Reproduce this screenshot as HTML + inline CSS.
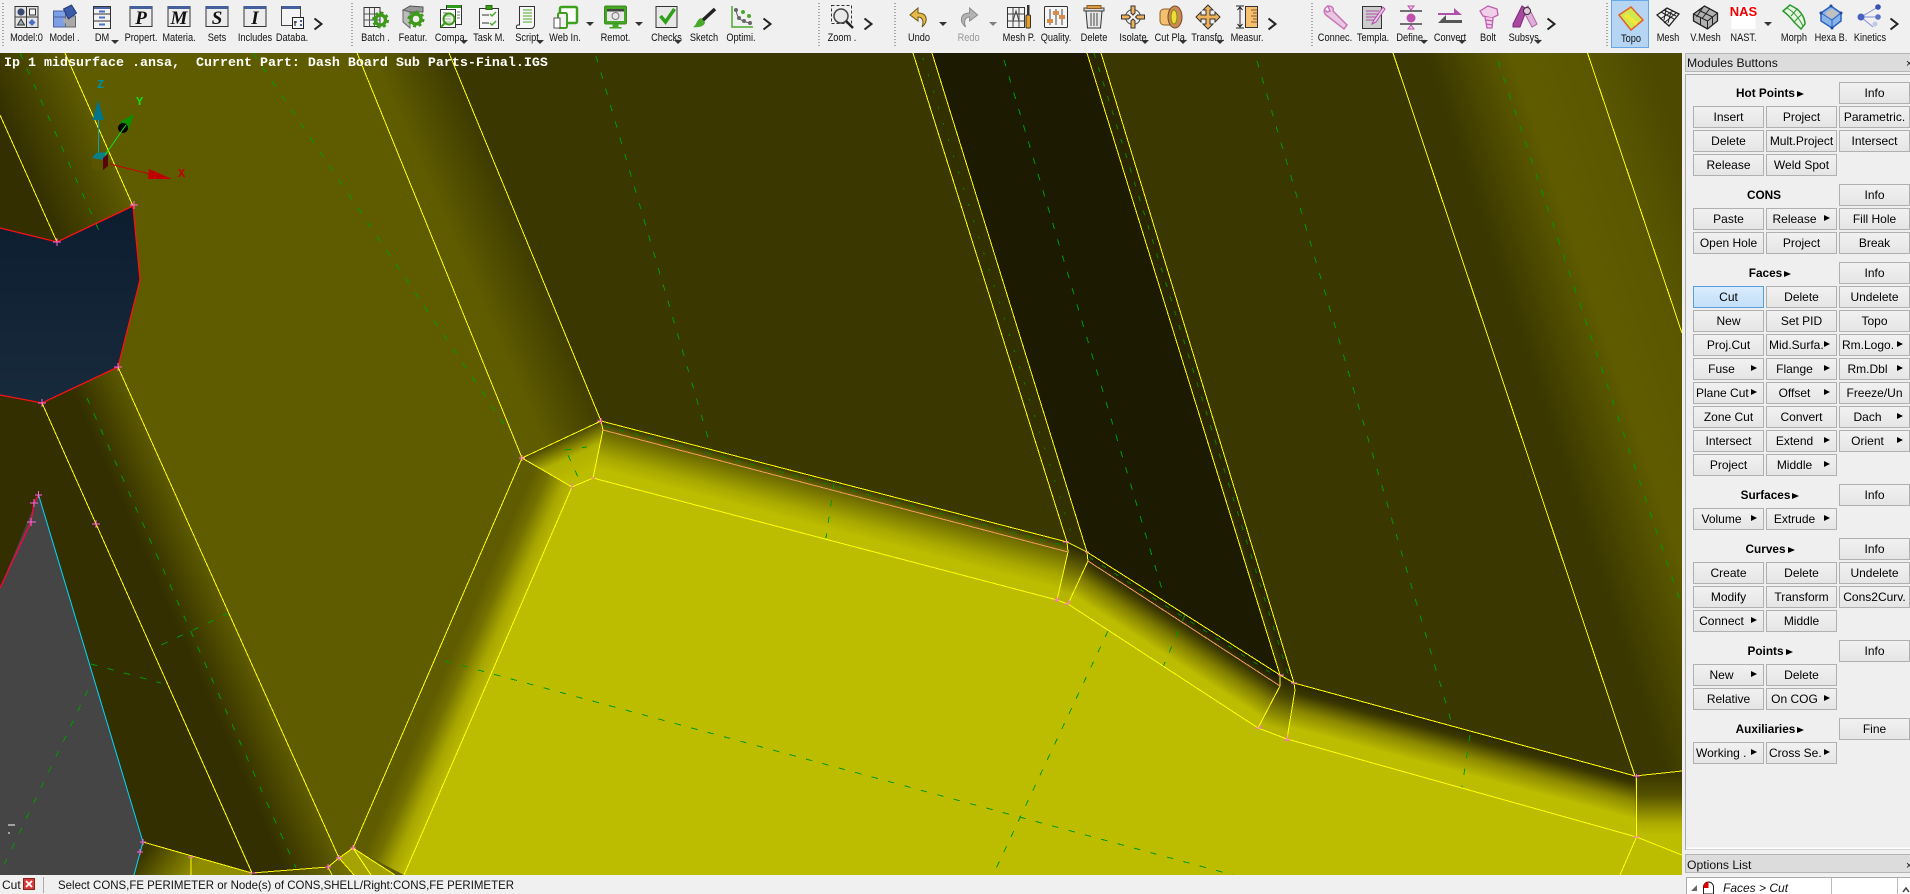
<!DOCTYPE html>
<html><head><meta charset="utf-8"><title>ANSA</title>
<style>
html,body{margin:0;padding:0;background:#f0f0f0;width:1910px;height:894px;overflow:hidden;font-family:"Liberation Sans",sans-serif}
svg{position:absolute;left:0;top:0;display:block}
.b{position:absolute;width:71px;height:22px;box-sizing:border-box;border:1px solid #b0b0b0;background:linear-gradient(#f1f1f1,#e5e5e5);font-size:12px;line-height:20px;text-align:center;color:#000;white-space:nowrap;overflow:hidden}
.c1{left:1693px}.c2{left:1766px}.c3{left:1839px}
.a{padding-right:14px}
.l{text-align:left;padding:0 0 0 2px}
.a i{position:absolute;left:57px;top:6px;width:0;height:0;border-top:3.5px solid transparent;border-bottom:3.5px solid transparent;border-left:6px solid #000}
.h{position:absolute;font-size:11.8px;font-weight:bold;line-height:16px;text-align:center;color:#000;left:1680px;width:180px}
.h i{display:inline-block;margin-left:2px;width:0;height:0;border-top:3.5px solid transparent;border-bottom:3.5px solid transparent;border-left:7px solid #000}
.t{font:11px "Liberation Sans",sans-serif;text-anchor:middle;transform-box:fill-box;transform-origin:center;transform:scaleX(.84);fill:#111}
</style></head><body>

<svg width="1910" height="894" viewBox="0 0 1910 894">
<defs>
<linearGradient id="g1" gradientUnits="userSpaceOnUse" x1="800" y1="473" x2="785.7" y2="528"><stop offset="0" stop-color="#3a3700"/><stop offset=".15" stop-color="#6a6700"/><stop offset=".6" stop-color="#a8a800"/><stop offset=".82" stop-color="#bcbc00"/></linearGradient>
<linearGradient id="g2" gradientUnits="userSpaceOnUse" x1="1180" y1="612" x2="1151" y2="657"><stop offset="0" stop-color="#1c1a00"/><stop offset=".2" stop-color="#3a3700"/><stop offset=".48" stop-color="#7f7c00"/><stop offset=".82" stop-color="#bcbc00"/></linearGradient>
<linearGradient id="g2b" gradientUnits="userSpaceOnUse" x1="1077" y1="547" x2="1060" y2="600"><stop offset="0" stop-color="#2a2700"/><stop offset=".3" stop-color="#5a5700"/><stop offset=".85" stop-color="#b5b500"/></linearGradient>
<linearGradient id="g2c" gradientUnits="userSpaceOnUse" x1="1288" y1="680" x2="1270" y2="732"><stop offset="0" stop-color="#2a2700"/><stop offset=".3" stop-color="#4a4700"/><stop offset=".9" stop-color="#b5b500"/></linearGradient>
<linearGradient id="g3" gradientUnits="userSpaceOnUse" x1="1470" y1="730" x2="1454" y2="790"><stop offset="0" stop-color="#2a2700"/><stop offset=".15" stop-color="#3a3700"/><stop offset=".42" stop-color="#8a8700"/><stop offset=".7" stop-color="#bcbc00"/></linearGradient>
<linearGradient id="g3b" gradientUnits="userSpaceOnUse" x1="0" y1="774" x2="0" y2="835"><stop offset="0" stop-color="#3a3700"/><stop offset=".35" stop-color="#555200"/><stop offset=".8" stop-color="#aaa900"/><stop offset="1" stop-color="#bcbc00"/></linearGradient>
<linearGradient id="gf" gradientUnits="userSpaceOnUse" x1="560" y1="440" x2="577" y2="476"><stop offset="0" stop-color="#4a4700"/><stop offset=".5" stop-color="#b0b000"/><stop offset="1" stop-color="#bcbc00"/></linearGradient>
<linearGradient id="gs" gradientUnits="userSpaceOnUse" x1="450" y1="660" x2="502" y2="683"><stop offset="0" stop-color="#5f5c00"/><stop offset=".25" stop-color="#747100"/><stop offset=".55" stop-color="#a8a600"/><stop offset=".8" stop-color="#bcbc00"/></linearGradient>
<linearGradient id="gl" gradientUnits="userSpaceOnUse" x1="143" y1="623" x2="220" y2="589"><stop offset=".35" stop-color="#332f00"/><stop offset="1" stop-color="#5f5c00"/></linearGradient>
<linearGradient id="gtl" gradientUnits="userSpaceOnUse" x1="0" y1="115" x2="78" y2="80"><stop offset="0" stop-color="#332f00"/><stop offset="1" stop-color="#5f5c00"/></linearGradient>
<linearGradient id="g12" gradientUnits="userSpaceOnUse" x1="420" y1="220" x2="510" y2="180"><stop offset=".22" stop-color="#5f5c00"/><stop offset="1" stop-color="#3a3700"/></linearGradient>
<linearGradient id="gr" gradientUnits="userSpaceOnUse" x1="1393" y1="53" x2="1678" y2="-42"><stop offset=".1" stop-color="#3a3700"/><stop offset=".38" stop-color="#5f5c00"/><stop offset=".6" stop-color="#5a5700"/><stop offset=".8" stop-color="#4d4a00"/></linearGradient>
<linearGradient id="gn" x1="0" y1="0" x2="0" y2="1"><stop offset="0" stop-color="#0d1d30"/><stop offset="1" stop-color="#172a3c"/></linearGradient>
<linearGradient id="gb" gradientUnits="userSpaceOnUse" x1="150" y1="845" x2="190" y2="875"><stop offset="0" stop-color="#3a3700"/><stop offset="1" stop-color="#8f8c00"/></linearGradient>
<linearGradient id="gb2" gradientUnits="userSpaceOnUse" x1="255" y1="870" x2="345" y2="870"><stop offset="0" stop-color="#3a3700"/><stop offset="1" stop-color="#6f6c00"/></linearGradient>
<linearGradient id="gst" gradientUnits="userSpaceOnUse" x1="1045" y1="300" x2="1062" y2="295"><stop offset="0" stop-color="#333000"/><stop offset="1" stop-color="#1c1a00"/></linearGradient>
<linearGradient id="gst2" gradientUnits="userSpaceOnUse" x1="1180" y1="400" x2="1195" y2="395"><stop offset="0" stop-color="#1c1a00"/><stop offset=".4" stop-color="#3f3c00"/><stop offset="1" stop-color="#2a2700"/></linearGradient>
</defs>

<!-- viewport -->
<rect x="0" y="53" width="1682" height="822" fill="#5f5c00"/>
<polygon points="0,53 65,53 133,206 57,242 0,228" fill="url(#gtl)"/>
<polygon points="0,395 42,403 252,875 0,875" fill="#332f00"/>
<polygon points="42,403 118,367 339,858 328,867 252,873" fill="url(#gl)"/>
<polygon points="357,53 449,53 601,421 522,458" fill="url(#g12)"/>
<polygon points="449,53 913,53 1067,542 601,421" fill="#3a3700"/>
<polygon points="913,53 932,53 1087,552 1067,542" fill="url(#gst)"/>
<polygon points="932,53 1087,53 1280,675 1087,552" fill="#1c1a00"/>
<polygon points="1087,53 1101,53 1294,683 1280,675" fill="url(#gst2)"/>
<polygon points="1101,53 1393,53 1635,776 1294,683" fill="#3a3700"/>
<polygon points="1393,53 1682,53 1682,771 1635,776" fill="url(#gr)"/>
<polygon points="522,458 353,848 404,875 572,487" fill="url(#gs)"/>
<polygon points="339,858 353,848 395,875 354,875" fill="#a5a300"/>
<polygon points="572,487 593,478 1057,600 1068,604 1258,728 1287,739 1636,837 1682,855 1682,875 404,875" fill="#bcbc00"/>
<polygon points="601,421 1067,542 1068,552 1057,600 593,478 603,430" fill="url(#g1)"/>
<polygon points="1067,542 1087,552 1088,561 1068,604 1057,600 1068,552" fill="url(#g2b)"/>
<polygon points="1087,552 1280,675 1280,686 1258,728 1068,604 1088,561" fill="url(#g2)"/>
<polygon points="1280,675 1294,683 1295,690 1287,739 1258,728 1280,686" fill="url(#g2c)"/>
<polygon points="1294,683 1635,776 1636.5,837 1287,739 1295,690" fill="url(#g3)"/>
<polygon points="1636.5,776 1682,771 1682,855 1636.5,837" fill="url(#g3b)"/>
<polygon points="522,458 601,421 603,430 593,478 572,487" fill="url(#gf)"/>
<polygon points="143,842 252,873 252,875 134,875" fill="url(#gb)"/>
<polygon points="252,873 328,867 339,858 354,875 252,875" fill="url(#gb2)"/>
<polygon points="0,228 57,242 133,206 140,280 118,367 42,403 0,395" fill="url(#gn)"/>
<polygon points="0,588 38.6,495 143,842 134,875 0,875" fill="#454545"/>

<!-- dashed green -->
<g fill="none" stroke="#009a00" stroke-width="1" stroke-dasharray="6.500 10.500" shape-rendering="crispEdges">
<path d="M20 53L100 233"/><path d="M87 398L296 868"/><path d="M253 53L508 430"/>
<path d="M596 56L711 448"/><path d="M1004 60L1164 596"/><path d="M1257 61L1452 724"/><path d="M1498 61L1679 598"/>
<path d="M229 613L157 647"/><path d="M91 664L161 683"/><path d="M88 690L0 873"/>
<path d="M445 661L1233 875"/><path d="M834 483L826 538"/><path d="M1185 615L1163 667"/><path d="M1108 631L993 875"/><path d="M1470 735L1462 787"/>
<path d="M565 450L587 447"/><path d="M568 455L578 477"/>
</g>
<g fill="none" stroke="#0a8000" stroke-width="1" stroke-dasharray="5 10" shape-rendering="crispEdges">
<path d="M605 426L1066 546"/><path d="M1089 557L1279 678"/><path d="M1094 53L1289 677"/>
</g>
<path d="M923 58L1077 552" fill="none" stroke="#0a8000" stroke-dasharray="2 15" shape-rendering="crispEdges"/>

<!-- yellow lines -->
<g fill="none" stroke="#ffff00" stroke-width="1" shape-rendering="crispEdges">
<path d="M65 53L133 206"/><path d="M0 115L57 242"/><path d="M42 403L252 873"/><path d="M118 367L339 858"/>
<path d="M357 53L522 458L353 848"/><path d="M449 53L601 421"/><path d="M913 53L1067 542"/><path d="M932 53L1087 552"/>
<path d="M1087 53L1280 675"/><path d="M1101 53L1294 683"/><path d="M1393 53L1635 776"/><path d="M1587.5 53L1682 333"/>
<path d="M522 458L601 421"/><path d="M522 458L572 487L593 478L603 430L601 421"/>
<path d="M572 487L404 875"/>
<path d="M601 421L1067 542L1087 552L1280 675L1294 683L1635 776L1682 771"/>
<path d="M593 478L1057 600L1068 604L1258 728L1287 739L1636.5 837L1682 855"/>
<path d="M1067 542L1068 552L1057 600"/><path d="M1087 552L1088 561L1068 604"/>
<path d="M1280 675L1280 686L1258 728"/><path d="M1294 683L1295 690L1287 739"/>
<path d="M1636.5 776L1636.5 837L1620 875"/>
<path d="M143 842L252 873L328 867L339 858L353 848L395 875"/><path d="M191 857L191 875"/><path d="M339 858L354 875"/><path d="M353 848L371 875"/><path d="M328 867L332 875"/>
</g>
<!-- orange -->
<g fill="none" stroke="#f09a60" stroke-width="1" shape-rendering="crispEdges">
<path d="M603 430L1068 552"/><path d="M1088 561L1280 686"/>
</g>
<!-- red / cyan -->
<g fill="none" stroke-width="1.3">
<path d="M0 228L57 242L133 206L140 280L118 367L42 403L0 395" stroke="#ff1010"/>
<path d="M0 588L31 522L34 503L38.6 495" stroke="#ff0040"/>
<path d="M38.6 495L143 842L134 875" stroke="#00d8ff" stroke-width="1"/>
</g>
<!-- crosses -->
<g fill="none" stroke="#ff66dd" stroke-width="1" shape-rendering="crispEdges">
<path d="M53 242h8M57 238v8M130 205h8M134 201v8M114 367h8M118 363v8M38 403h8M42 399v8"/>
<path d="M35 495h7M38.6 491v7M30 503h8M34 499v8M27 522h9M31 518v8M92 524h8M96 520v8"/>
<path d="M140 842h6M143 839v6M137 852h6M140 849v6M188 857h6M249 873h8M325 867h6M328 864v6M336 858h6M339 855v6M350 848h6M353 845v6"/>
<path d="M597 421h6M601 418v6M519 458h6M522 455v6M572 483v7M591 478h4"/>
<path d="M1063 542h6M1085 552h4M1054 600h6M1057 597v5M1064 604h5M1069 600v4M1278 675h6M1291 683h6M1255 728h6M1261 725v4M1284 740h6M1287 735v6M1633 776h7M1636.5 774v4M1633 837h7"/>
</g>
<path d="M8 825h7M8 833h2" stroke="#fff" stroke-width="1" shape-rendering="crispEdges"/>

<!-- gizmo -->
<polygon points="98,100 92.5,120 104,120" fill="#00748a"/>
<path d="M98.5 120V155" stroke="#0aa0b0" stroke-width="1"/>
<rect x="92" y="158" width="11" height="11" fill="#5b5500"/>
<polygon points="92,158 96,153 108,152 103,160" fill="#0a7f85"/>
<polygon points="103,158 108,154 108,166 103,170" fill="#5a0505"/>
<polygon points="134,114 120,122 128,131" fill="#0d8f00"/>
<circle cx="123" cy="128" r="5" fill="#000"/>
<path d="M126 125L105 155" stroke="#10e010" stroke-width="1"/>
<path d="M110 164L150 174" stroke="#cc0000" stroke-width="1"/>
<polygon points="172,179 149,169 148,179" fill="#c00000"/>
<g font-family="'Liberation Mono',monospace" font-weight="bold" font-size="12">
<text x="97" y="88" fill="#008fa0">Z</text><text x="136" y="105" fill="#10e010">Y</text><text x="178" y="177" fill="#c00000">X</text>
</g>
<text x="4" y="66" xml:space="preserve" font-family="'Liberation Mono',monospace" font-weight="bold" font-size="13.33" fill="#fff">Ip 1 midsurface .ansa,  Current Part: Dash Board Sub Parts-Final.IGS</text>

<!-- right background -->
<rect x="1682" y="53" width="228" height="841" fill="#f0f0f0"/>
<!-- status -->
<rect x="0" y="875" width="1910" height="19" fill="#f0f0f0"/>
<text x="2" y="889" font-family="'Liberation Sans',sans-serif" font-size="12" fill="#111">Cut</text>
<rect x="23.5" y="878.5" width="11" height="11" fill="#d83a3a" stroke="#8a2020"/>
<path d="M26 881l6 6M32 881l-6 6" stroke="#fff" stroke-width="1.8"/>
<path d="M43.5 877V893" stroke="#aaa"/>
<text x="58" y="889" font-family="'Liberation Sans',sans-serif" font-size="12" fill="#111" textLength="456" lengthAdjust="spacingAndGlyphs">Select CONS,FE PERIMETER or Node(s) of CONS,SHELL/Right:CONS,FE PERIMETER</text>

<!-- panel frame -->
<rect x="1685.5" y="53.5" width="230" height="18" fill="#dcdcdc" stroke="#b5b5b5"/>
<text x="1687" y="67" font-family="'Liberation Sans',sans-serif" font-size="12.2" fill="#111">Modules Buttons</text>
<text x="1906" y="67" font-family="'Liberation Sans',sans-serif" font-size="11" fill="#111">×</text>
<rect x="1685.5" y="74.5" width="230" height="775" fill="#efefef" stroke="#aaa"/>
<path d="M1686 848.5H1910" stroke="#fff" stroke-width="2"/>
<rect x="1685.5" y="854.5" width="230" height="18" fill="#dcdcdc" stroke="#b5b5b5"/>
<text x="1687" y="869" font-family="'Liberation Sans',sans-serif" font-size="12.2" fill="#111">Options List</text>
<text x="1906" y="869" font-family="'Liberation Sans',sans-serif" font-size="11" fill="#111">×</text>
<rect x="1686.5" y="877.5" width="230" height="20" fill="#fff" stroke="#aaa"/>
<path d="M1831.5 878V894M1897.5 878V894" stroke="#bbb"/>
<path d="M1903 892l3-4 3 4" fill="none" stroke="#444" stroke-width="1.5"/>
<polygon points="1697,885 1697,891 1691,891" fill="#666"/>
<path d="M1703.5 894V887a5 5 0 0 1 10 0V894z" fill="#fff" stroke="#222"/>
<path d="M1703.5 888V886a5 5 0 0 1 5-4V888z" fill="#e00000"/>
<text x="1723" y="892" font-family="'Liberation Sans',sans-serif" font-size="12" font-style="italic" fill="#111">Faces &gt; Cut</text>
</svg>

<!-- Toolbar -->
<svg width="1910" height="53" viewBox="0 0 1910 53" style="background:#f0f0f0">
<defs>
<g id="gear"><circle r="5" fill="none" stroke="#3f9a1c" stroke-width="3.4"/><circle r="7.3" fill="none" stroke="#3f9a1c" stroke-width="2.4" stroke-dasharray="3 2.7"/></g>
<path id="chev" d="M-3.5 18.5L3.5 24L-3.5 29.5" fill="none" stroke="#222" stroke-width="2"/>
<path id="dd" d="M-4 0h8l-4 4z" fill="#333"/>
</defs>
<g stroke="#a8a8a8" stroke-dasharray="1 2" stroke-width="2">
<path d="M3 3V46M352 3V46M819 3V46M895 3V46M1312 3V46M1607 3V46"/>
</g>

<rect x="1611.5" y=".5" width="37" height="47" fill="#b5d5f2" stroke="#66a7e8"/>

<!-- labels -->
<g>
<text class="t" x="26.5" y="41">Model:0</text><text class="t" x="64.5" y="41">Model .</text><text class="t" x="102" y="41">DM</text><text class="t" x="141" y="41">Propert.</text><text class="t" x="179" y="41">Materia.</text><text class="t" x="217" y="41">Sets</text><text class="t" x="255" y="41">Includes</text><text class="t" x="292" y="41">Databa.</text>
<text class="t" x="375.5" y="41">Batch .</text><text class="t" x="413" y="41">Featur.</text><text class="t" x="451" y="41">Compa.</text><text class="t" x="489" y="41">Task M.</text><text class="t" x="527" y="41">Script</text><text class="t" x="565" y="41">Web In.</text><text class="t" x="615.5" y="41">Remot.</text>
<text class="t" x="666.5" y="41">Checks</text><text class="t" x="704" y="41">Sketch</text><text class="t" x="741" y="41">Optimi.</text><text class="t" x="842" y="41">Zoom .</text>
<text class="t" x="919" y="41">Undo</text><text class="t" x="968.6" y="41" style="fill:#999">Redo</text><text class="t" x="1019" y="41">Mesh P.</text><text class="t" x="1056" y="41">Quality.</text><text class="t" x="1094" y="41">Delete</text><text class="t" x="1133" y="41">Isolate</text><text class="t" x="1171" y="41">Cut Pla.</text><text class="t" x="1208" y="41">Transfo.</text><text class="t" x="1247" y="41">Measur.</text>
<text class="t" x="1335" y="41">Connec.</text><text class="t" x="1373" y="41">Templa.</text><text class="t" x="1411" y="41">Define.</text><text class="t" x="1450" y="41">Convert</text><text class="t" x="1488" y="41">Bolt</text><text class="t" x="1525" y="41">Subsys.</text>
<text class="t" x="1631" y="42">Topo</text><text class="t" x="1668" y="41">Mesh</text><text class="t" x="1705.5" y="41">V.Mesh</text><text class="t" x="1743.5" y="41">NAST.</text><text class="t" x="1794" y="41">Morph</text><text class="t" x="1831" y="41">Hexa B.</text><text class="t" x="1870" y="41">Kinetics</text>
</g>

<!-- chevrons & dropdowns -->
<use href="#chev" x="318"/><use href="#chev" x="767"/><use href="#chev" x="868"/><use href="#chev" x="1272"/><use href="#chev" x="1551"/><use href="#chev" x="1894"/>
<use href="#dd" x="115" y="40"/><use href="#dd" x="464" y="40"/><use href="#dd" x="540" y="40"/><use href="#dd" x="590" y="22"/><use href="#dd" x="639" y="22"/><use href="#dd" x="678" y="40"/><use href="#dd" x="943" y="22"/><use href="#dd" x="993" y="22" style="opacity:.6"/><use href="#dd" x="1145" y="40"/><use href="#dd" x="1183" y="40"/><use href="#dd" x="1220" y="40"/><use href="#dd" x="1424" y="40"/><use href="#dd" x="1462" y="40"/><use href="#dd" x="1538" y="40"/><use href="#dd" x="1768" y="22"/>

<!-- Model:0 -->
<g transform="translate(26.5 0)"><rect x="-11.5" y="6.5" width="23" height="21" fill="#e4e4e4" stroke="#333"/><path d="M0 7V27M-11 17H11" stroke="#333"/><circle cx="-5.5" cy="12" r="3.6" fill="#38486e"/><rect x="3" y="9" width="6" height="6" fill="#f4f4f4" stroke="#333"/><path d="M-9 25l3.5-6 3.5 6z" fill="#9aa" stroke="#333"/><path d="M5.5 19l3.5 3.5-3.5 3.5-3.5-3.5z" fill="#4a70c8"/></g>
<!-- Model . -->
<g transform="translate(64.5 0)"><rect x="-11" y="11" width="12" height="12" fill="#7d9fe6" stroke="#4a60a0"/><rect x="-11" y="17" width="12" height="10" fill="#7d9fe6" stroke="#4a60a0"/><rect x="1" y="16" width="10" height="11" fill="#a8a8a8" stroke="#666"/><circle cx="1" cy="21" r="2.5" fill="#a8a8a8"/><polygon points="-1,9 7,5 12,13 4,19" fill="#3b5aa8" stroke="#263c78"/></g>
<!-- DM -->
<g transform="translate(102 0)"><rect x="-8.5" y="6.5" width="17" height="22" fill="#f2f2f2" stroke="#333"/><rect x="-8" y="7" width="16" height="2" fill="#4a66aa"/><path d="M-8 14H8M-8 21H8" stroke="#333"/><path d="M-3 11.500h6M-3 17.500h6M-3 24.500h6" stroke="#4a70c8" stroke-width="2"/></g>
<!-- P M S I -->
<g font-family="'Liberation Serif',serif" font-weight="bold" font-style="italic" font-size="19" text-anchor="middle" fill="#111">
<g transform="translate(141 0)"><rect x="-11" y="6.500" width="22" height="20" fill="#ececec" stroke="#333"/><rect x="-11" y="6" width="22" height="3" fill="#46609e"/><text y="24">P</text></g>
<g transform="translate(179 0)"><rect x="-11" y="6.500" width="22" height="20" fill="#ececec" stroke="#333"/><rect x="-11" y="6" width="22" height="3" fill="#46609e"/><text y="24">M</text></g>
<g transform="translate(217 0)"><rect x="-11" y="6.500" width="22" height="20" fill="#ececec" stroke="#333"/><rect x="-11" y="6" width="22" height="3" fill="#46609e"/><text y="24">S</text></g>
<g transform="translate(255 0)"><rect x="-11" y="6.500" width="22" height="20" fill="#ececec" stroke="#333"/><rect x="-11" y="6" width="22" height="3" fill="#46609e"/><text y="24">I</text></g>
</g>
<!-- Databa -->
<g transform="translate(292 0)"><rect x="-10.500" y="6.500" width="19" height="19" fill="#f4f4f4" stroke="#444"/><rect x="-10" y="6" width="18" height="3" fill="#46609e"/><rect x="0.500" y="17.500" width="11" height="11" fill="#f4f4f4" stroke="#222"/><path d="M3 21v5M2 22h3" stroke="#111"/><path d="M8 21h2M8 25h2" stroke="#3a5fb0" stroke-width="2"/></g>
<!-- Batch -->
<g transform="translate(375.500 0)"><rect x="-11.500" y="7.500" width="16" height="19" fill="#eee" stroke="#333"/><path d="M-6 8V26M-1 8V26M-11 14H4M-11 20H4" stroke="#555"/><use href="#gear" x="5" y="20"/></g>
<!-- Featur -->
<g transform="translate(413 0)"><polygon points="-10,10 -3,6 10,7 10,12 -3,12" fill="#999" stroke="#555"/><polygon points="-10,10 -3,12 -3,28 -10,22" fill="#bbb" stroke="#666"/><use href="#gear" x="3" y="19"/></g>
<!-- Compa -->
<g transform="translate(451 0)"><rect x="-4.500" y="5.500" width="15" height="19" fill="#fff" stroke="#333"/><rect x="-4" y="5" width="14" height="3" fill="#2e9a1a"/><rect x="-10.500" y="9.500" width="15" height="18" fill="#fff" stroke="#333"/><path d="M-8 13h8M-8 16h8M-8 19h8M-8 22h8M6 12h3M6 15h3M6 18h3" stroke="#777"/><circle cx="-2" cy="19" r="5.500" fill="#d8f0c8" fill-opacity=".5" stroke="#3a9a1a" stroke-width="2"/><path d="M-6 23l-4 4" stroke="#3a9a1a" stroke-width="2"/></g>
<!-- Task M -->
<g transform="translate(489 0)"><rect x="-9.500" y="8.500" width="19" height="20" fill="#f6f6f6" stroke="#333"/><rect x="-3" y="5.500" width="6" height="4" fill="#3a9a1a" stroke="#2a6a10"/><path d="M-7 15h7M-7 23h7" stroke="#333"/><path d="M1 14l2 2 4-4M1 23l2 2 4-4" fill="none" stroke="#4aa82a" stroke-width="1.500"/></g>
<!-- Script -->
<g transform="translate(527 0)"><path d="M-7.500 6.500H7.500V25C7.500 27 6 28.500 4 28.500H-10C-11 28.500-11 25-9 25H-7.500z" fill="#f8f8f8" stroke="#333"/><path d="M-4 10h9M-4 13h9M-4 16h9M-4 19h9M-4 22h9" stroke="#4aa82a"/></g>
<!-- Web In -->
<g transform="translate(565 0)"><rect x="-5" y="7" width="17" height="16" rx="1.500" fill="#fff" stroke="#3fa01e" stroke-width="2.500"/><rect x="-7" y="13" width="9" height="15" rx="1.500" fill="#f4f4f4" stroke="#3fa01e" stroke-width="2"/><rect x="-11" y="18" width="6" height="10" fill="#fff" stroke="#555"/></g>
<!-- Remot -->
<g transform="translate(615.500 0)"><rect x="-11" y="6" width="22" height="18" rx="1.500" fill="#45a626" stroke="#3a8a1c"/><rect x="-8.500" y="9" width="17" height="12" fill="#e8e8e8"/><rect x="-8.500" y="9" width="17" height="2.500" fill="#444"/><circle cy="16" r="3.500" fill="none" stroke="#777"/><rect x="-3" y="24" width="6" height="3" fill="#45a626"/><rect x="-6" y="27" width="12" height="1.500" fill="#45a626"/></g>
<!-- Checks -->
<g transform="translate(666.500 0)"><rect x="-10.500" y="6.500" width="21" height="21" fill="#e8e8e8" stroke="#333"/><path d="M-6 16l5 6L8 9" fill="none" stroke="#2fa01a" stroke-width="3.500"/></g>
<!-- Sketch -->
<g transform="translate(704 0)"><path d="M11 9L-2 21" stroke="#222" stroke-width="3.500"/><path d="M-3 18C-8 20-7 25-11 27C-5 28 1 26 1 22z" fill="#4aa82a"/></g>
<!-- Optimi -->
<g transform="translate(741 0)"><path d="M-9 6V27H12" fill="none" stroke="#4aa82a" stroke-width="1.500"/><path d="M-5 10C-4 20 3 22 9 23" fill="none" stroke="#555"/><g fill="#666"><circle cx="-5" cy="10" r="2"/><circle cx="-2" cy="18" r="2"/><circle cx="3" cy="21" r="2"/><circle cx="9" cy="23" r="2"/></g><g fill="#4aa82a"><circle cx="2" cy="12" r="2"/><circle cx="8" cy="16" r="2"/></g></g>
<!-- Zoom -->
<g transform="translate(842 0)"><rect x="-10.500" y="5.500" width="20" height="18" fill="none" stroke="#333" stroke-dasharray="3 2"/><circle cy="16" r="7" cx="-1" fill="#e8e8e8" stroke="#444" stroke-width="1.500"/><path d="M4 21l7 7" stroke="#222" stroke-width="2.500"/></g>
<!-- Undo -->
<g transform="translate(919 0)"><path d="M3 27C10 21 8 13 -1 13V8L-9 15L-1 21V17C4 17 5 22 3 27z" fill="#e8b84a" stroke="#6a5518"/></g>
<!-- Redo -->
<g transform="translate(968.600 0)"><path d="M-3 27C-10 21 -8 13 1 13V8L9 15L1 21V17C-4 17 -5 22 -3 27z" fill="#b4b4b4" stroke="#8a8a8a"/></g>
<!-- Mesh P -->
<g transform="translate(1019 0)"><rect x="-11.500" y="7.500" width="17" height="20" fill="#f2f2f2" stroke="#333"/><path d="M-6 8V27M0 8V27M-11 14H5M-11 21H5M-6 21L-3 11L0 21" stroke="#444" fill="none"/><rect x="8" y="5" width="2.500" height="10" fill="#333"/><rect x="7" y="15" width="4.500" height="13" rx="1" fill="#e8a020" stroke="#333"/></g>
<!-- Quality -->
<g transform="translate(1056 0)"><rect x="-11.500" y="6.500" width="23" height="21" rx="1" fill="#f6f6f6" stroke="#333"/><path d="M-6 9V25M0 9V25M6 9V25" stroke="#444"/><rect x="-9" y="19" width="6" height="4" fill="#d98b4a"/><rect x="-3" y="11" width="6" height="4" fill="#d98b4a"/><rect x="3" y="15" width="6" height="4" fill="#d98b4a"/></g>
<!-- Delete -->
<g transform="translate(1094 0)"><rect x="-10" y="8" width="20" height="3" fill="#d8d8d8" stroke="#444"/><rect x="-7" y="5.500" width="14" height="3" fill="#d99a4a" stroke="#8a5a20"/><path d="M-8 11L-6.500 28H6.500L8 11z" fill="#e8e8e8" stroke="#333"/><path d="M-3 13V26M0 13V26M3 13V26" stroke="#444"/></g>
<!-- Isolate -->
<g transform="translate(1133 0)"><circle cy="17" r="7.500" fill="none" stroke="#444"/><g fill="#f2b25a" stroke="#333"><path d="M-2 6h4v7l-2 2-2-2zM-2 28h4v-7l-2-2-2 2zM-11.500 15v4h7l2-2-2-2zM11.500 15v4h-7l-2-2 2-2z"/></g></g>
<!-- Cut Pla -->
<g transform="translate(1171 0)"><rect x="-11" y="9" width="14" height="16" rx="4" fill="#f2c070" stroke="#8a6020"/><ellipse cx="4" cy="17" rx="7" ry="11" fill="#c98a5a" stroke="#7a4a20"/><ellipse cx="3" cy="17" rx="3" ry="7" fill="#eedd33" stroke="#8a8a10"/></g>
<!-- Transfo -->
<g transform="translate(1208 0)"><path d="M0 5L5 10H2V15H7V12L12 17L7 22V19H2V24H5L0 29L-5 24H-2V19H-7V22L-12 17L-7 12V15H-2V10H-5z" fill="#f2b25a" stroke="#333"/></g>
<!-- Measur -->
<g transform="translate(1247 0)"><path d="M-11 6h8M-11 28h8M-7 7V27M-9.500 10l2.500-3 2.500 3M-9.500 24l2.500 3 2.500-3" fill="none" stroke="#222"/><rect x="-1.500" y="6.500" width="12" height="21" fill="#f6c070" stroke="#333"/><path d="M4 10h6M6 13h4M4 16h6M6 19h4M4 22h6" stroke="#8a5a20"/></g>
<!-- Connec -->
<g transform="translate(1335 0)"><path d="M-7 6C-11 8-12 12-9 15L9 29L12 25L-2 11C-1 8-3 6-7 6L-5 11L-8 12L-11 9" fill="#e8c8e0" stroke="#c878b8" stroke-width="1.500"/></g>
<!-- Templa -->
<g transform="translate(1373 0)"><rect x="-10.500" y="6.500" width="19" height="22" fill="#ccc" stroke="#333"/><path d="M-7 11h13M-7 14h13M-7 17h10M-7 20h8" stroke="#b050a8"/><path d="M10 7L1 20L-1 24L3 22L12 9z" fill="#efc8e8" stroke="#b050a8"/></g>
<!-- Define -->
<g transform="translate(1411 0)"><path d="M-11 11H11M-11 24H11" stroke="#222" stroke-width="1.300"/><circle cy="18" r="4.500" fill="#c050b0"/><path d="M-3 6h6l-3 4zM-3 29h6l-3-4z" fill="#efc8e8" stroke="#c050b0"/></g>
<!-- Convert -->
<g transform="translate(1450 0)"><path d="M-12 13H4V8L12 15H-12z" fill="#b050a8"/><path d="M12 20H-4V15L-12 23H12z" fill="#555"/></g>
<!-- Bolt -->
<g transform="translate(1488 0)"><path d="M-8 11L0 6L9 9L10 15L4 18L-5 16z" fill="#f0d0e8" stroke="#c060b0" stroke-width="1.300"/><path d="M-3 17L-1 28L4 28L5 18M-2 20L5 21M-2 24L5 25" fill="#f0d0e8" stroke="#c060b0" stroke-width="1.300"/></g>
<!-- Subsys -->
<g transform="translate(1525 0)"><polygon points="0,8 3,6 12,24 7,27 0,14" fill="#e0b0d8" stroke="#b060a8"/><polygon points="0,8 -3,6 -12,24 -12,27 -5,27 0,14" fill="#a848a0" stroke="#7a2a78"/><circle cy="11" r="3.500" cx="2" fill="#e8c8e0" stroke="#333"/></g>
<!-- Topo -->
<g transform="translate(1631 0)"><polygon points="-12,15 0,7 12,20 0,30" fill="#cfe850" stroke="#e8602a" stroke-width="1.500"/><path d="M-6 15L6 24" stroke="#f2e83a" stroke-width="4"/></g>
<!-- Mesh -->
<g transform="translate(1668 0)"><polygon points="-11,15 -1,8 11,14 1,26" fill="#f0f0f0" stroke="#222" stroke-width="1.300"/><path d="M-7 12L6 19M-4 10L8 16M-8 19L5 11M-4 23L8 13M-2 9L-4 20M3 12L0 23" stroke="#222" fill="none"/></g>
<!-- V.Mesh -->
<g transform="translate(1705.500 0)"><polygon points="-12,14 -1,6 12,13 12,21 2,29 -12,21" fill="#b0b0b0" stroke="#222" stroke-width="1.300"/><path d="M-12 14L2 21L12 13M2 21V29M-7 10L7 17M-3 8L-9 17M4 9L-3 18M-5 17V25M7 17V25" stroke="#222" fill="none"/></g>
<!-- NAST -->
<g transform="translate(1743.500 0)"><rect x="-12" y="6" width="24" height="23" fill="#fff"/><text x="0" y="16" text-anchor="middle" font-family="'Liberation Sans',sans-serif" font-weight="bold" font-size="13" fill="#f00000">NAS</text></g>
<!-- Morph -->
<g transform="translate(1794 0)"><path d="M-11 11L-4 5L3 9C9 14 11 20 11 24L7 29L0 22C-3 18-7 14-11 11z" fill="#eaf4e4" stroke="#2a9a2a" stroke-width="1.500"/><path d="M-7 8C0 12 5 18 9 26M-3 16L3 9M0 22L7 15" fill="none" stroke="#2a9a2a"/></g>
<!-- Hexa B -->
<g transform="translate(1831 0)"><polygon points="-10,13 0,6 10,13 10,21 1,28 -10,21" fill="#8ab4e8" stroke="#2a60c0" stroke-width="1.500"/><polygon points="-5,12 1,9 8,13 1,19 -5,16" fill="#c0c0c0"/><path d="M-10 13L1 20L10 13M1 20V28" fill="none" stroke="#2a60c0"/><g fill="#2048a0"><circle cx="-10" cy="13" r="1.500"/><circle cx="10" cy="13" r="1.500"/><circle cx="1" cy="28" r="1.500"/><circle cx="0" cy="6" r="1.500"/></g></g>
<!-- Kinetics -->
<g transform="translate(1870 0)"><path d="M-9 17L8 7M-9 17H8M-9 17L3 27" stroke="#8090d0" fill="none"/><circle cx="-9" cy="17" r="3.500" fill="#4a60c0"/><circle cx="8" cy="7" r="2.800" fill="#3a50b0"/><circle cx="8" cy="17" r="2.800" fill="#5a70c8"/><circle cx="5" cy="24" r="2.500" fill="#c0c8e8"/></g>
</svg>

<!-- Module buttons -->
<div class="h" style="top:85px">Hot Points<i></i></div>
<div class="b c3" style="top:82px">Info</div>
<div class="b c1" style="top:106px">Insert</div><div class="b c2" style="top:106px">Project</div><div class="b c3" style="top:106px">Parametric.</div>
<div class="b c1" style="top:130px">Delete</div><div class="b c2" style="top:130px">Mult.Project</div><div class="b c3" style="top:130px">Intersect</div>
<div class="b c1" style="top:154px">Release</div><div class="b c2" style="top:154px">Weld Spot</div>

<div class="h" style="top:187px;left:1674px">CONS</div>
<div class="b c3" style="top:184px">Info</div>
<div class="b c1" style="top:208px">Paste</div><div class="b c2 a" style="top:208px">Release<i></i></div><div class="b c3" style="top:208px">Fill Hole</div>
<div class="b c1" style="top:232px">Open Hole</div><div class="b c2" style="top:232px">Project</div><div class="b c3" style="top:232px">Break</div>

<div class="h" style="top:265px">Faces<i></i></div>
<div class="b c3" style="top:262px">Info</div>
<div class="b c1" style="top:286px;background:linear-gradient(#d9ecfc,#c3dff7);border-color:#569ede">Cut</div><div class="b c2" style="top:286px">Delete</div><div class="b c3" style="top:286px">Undelete</div>
<div class="b c1" style="top:310px">New</div><div class="b c2" style="top:310px">Set PID</div><div class="b c3" style="top:310px">Topo</div>
<div class="b c1" style="top:334px">Proj.Cut</div><div class="b c2 a l" style="top:334px">Mid.Surfa.<i></i></div><div class="b c3 a l" style="top:334px">Rm.Logo.<i></i></div>
<div class="b c1 a" style="top:358px">Fuse<i></i></div><div class="b c2 a" style="top:358px">Flange<i></i></div><div class="b c3 a" style="top:358px">Rm.Dbl<i></i></div>
<div class="b c1 a l" style="top:382px">Plane Cut<i></i></div><div class="b c2 a" style="top:382px">Offset<i></i></div><div class="b c3" style="top:382px">Freeze/Un</div>
<div class="b c1" style="top:406px">Zone Cut</div><div class="b c2" style="top:406px">Convert</div><div class="b c3 a" style="top:406px">Dach<i></i></div>
<div class="b c1" style="top:430px">Intersect</div><div class="b c2 a" style="top:430px">Extend<i></i></div><div class="b c3 a" style="top:430px">Orient<i></i></div>
<div class="b c1" style="top:454px">Project</div><div class="b c2 a" style="top:454px">Middle<i></i></div>

<div class="h" style="top:487px">Surfaces<i></i></div>
<div class="b c3" style="top:484px">Info</div>
<div class="b c1 a" style="top:508px">Volume<i></i></div><div class="b c2 a" style="top:508px">Extrude<i></i></div>

<div class="h" style="top:541px">Curves<i></i></div>
<div class="b c3" style="top:538px">Info</div>
<div class="b c1" style="top:562px">Create</div><div class="b c2" style="top:562px">Delete</div><div class="b c3" style="top:562px">Undelete</div>
<div class="b c1" style="top:586px">Modify</div><div class="b c2" style="top:586px">Transform</div><div class="b c3" style="top:586px">Cons2Curv.</div>
<div class="b c1 a" style="top:610px">Connect<i></i></div><div class="b c2" style="top:610px">Middle</div>

<div class="h" style="top:643px">Points<i></i></div>
<div class="b c3" style="top:640px">Info</div>
<div class="b c1 a" style="top:664px">New<i></i></div><div class="b c2" style="top:664px">Delete</div>
<div class="b c1" style="top:688px">Relative</div><div class="b c2 a" style="top:688px">On COG<i></i></div>

<div class="h" style="top:721px">Auxiliaries<i></i></div>
<div class="b c3" style="top:718px">Fine</div>
<div class="b c1 a l" style="top:742px">Working .<i></i></div><div class="b c2 a l" style="top:742px">Cross Se.<i></i></div>
</body></html>
